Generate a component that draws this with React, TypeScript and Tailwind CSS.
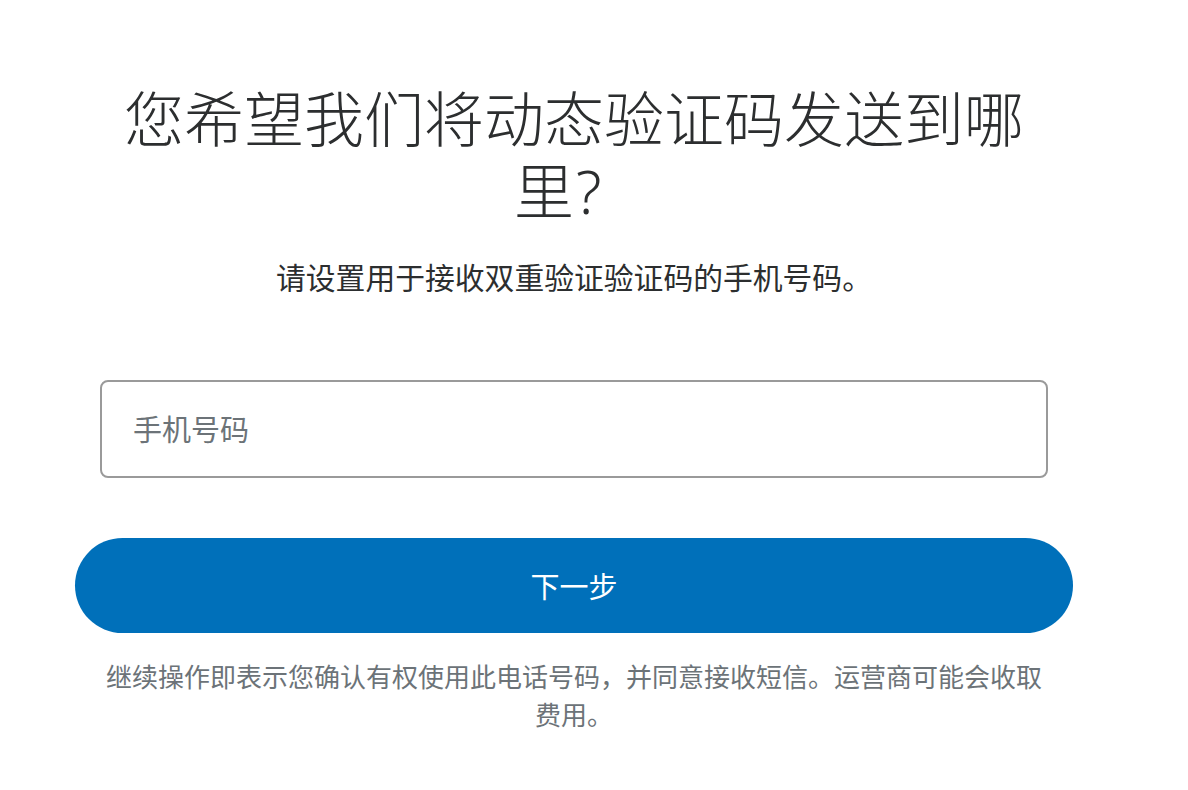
import React from "react";

export default function App() {
  const font = { fontFamily: '"Noto Sans CJK SC", "Noto Sans", sans-serif' };
  return (
    <div className="min-h-[790px] w-full bg-white" style={font}>
      <div className="ml-[75px] w-[998px] pt-[80px] flex flex-col items-center">
        <h1 className="w-[948px] text-center text-[60px] leading-[72px] font-light text-[#2c2e2f]">
          您希望我们将动态验证码发送到哪里
          <span
            style={{ fontFamily: '"Noto Sans", "Liberation Sans", sans-serif' }}
            className="inline-block w-[60px] text-left pl-[2px] font-light"
          >
            ?
          </span>
        </h1>
        <p className="mt-[29px] text-[29.8px] leading-[40px] text-[#2c2e2f]">
          请设置用于接收双重验证验证码的手机号码。
        </p>
        <div className="mt-[84px] w-[948px] h-[98px] rounded-[8px] border-2 border-[#9a9a9a] flex items-center px-[31px]">
          <input
            className="w-full bg-transparent outline-none text-[29px] text-[#2c2e2f] placeholder:text-[#6c7378]"
            placeholder="手机号码"
            style={font}
          />
        </div>
        <button className="mt-[60px] w-[998px] h-[95px] rounded-full bg-[#0070ba] text-white text-[29px] flex items-center justify-center">
          下一步
        </button>
        <p className="mt-[24px] w-[940px] text-center text-[26px] leading-[38px] text-[#6c7378]">
          继续操作即表示您确认有权使用此电话号码，并同意接收短信。运营商可能会收取费用。
        </p>
      </div>
    </div>
  );
}
